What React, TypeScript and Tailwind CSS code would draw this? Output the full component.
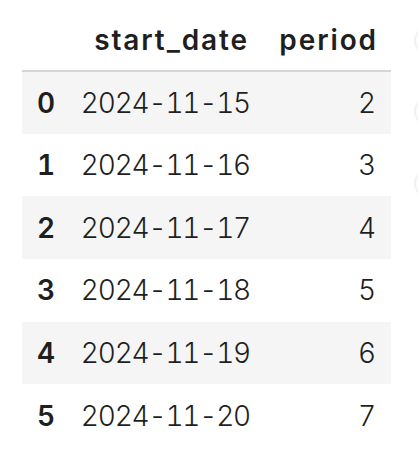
import React from 'react';

const ROWS: [number, string, number][] = [
  [0, '2024-11-15', 2],
  [1, '2024-11-16', 3],
  [2, '2024-11-17', 4],
  [3, '2024-11-18', 5],
  [4, '2024-11-19', 6],
  [5, '2024-11-20', 7],
];

const App: React.FC = () => {
  return (
    <div
      className="relative w-[418px] h-[458px] overflow-hidden bg-white text-[#1f1f1f] tabular-nums"
      style={{ fontFamily: 'Inter, "Noto Sans CJK JP", sans-serif' }}
    >
      <div className="pt-[10px] pl-[22px]">
        <table className="table-fixed w-[369px] border-collapse text-[28px] leading-[34px] whitespace-nowrap">
          <thead>
            <tr className="h-[61px] border-b-2 border-[#d6d6d6]">
              <th className="w-[49px]" />
              <th className="w-[192px] text-right pr-[14px] font-semibold tracking-[1.9px]">start_date</th>
              <th className="w-[128px] text-right pr-[13px] font-semibold tracking-[1.9px]">period</th>
            </tr>
          </thead>
          <tbody>
            {ROWS.map(([idx, date, period]) => (
              <tr key={idx} className={idx % 2 === 0 ? 'bg-[#f5f5f5]' : 'bg-white'}>
                <th className="h-[62.7px] text-left pl-[15px] font-semibold">{idx}</th>
                <td className="text-right pr-[13px] font-light tracking-[-1.2px]">{date}</td>
                <td className="text-right pr-[15px] font-light">{period}</td>
              </tr>
            ))}
          </tbody>
        </table>
      </div>
      {[27, 98, 170].map(top => (
        <div
          key={top}
          className="absolute left-[414px] w-[27px] h-[27px] rounded-full border-2 border-[#f0f0f5] bg-white"
          style={{ top }}
        />
      ))}
    </div>
  );
};

export default App;
